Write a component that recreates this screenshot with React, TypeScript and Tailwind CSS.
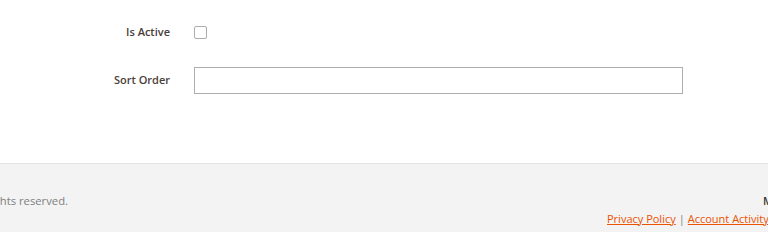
export default function App() {
  return (
    <div
      className="w-[768px] h-[232px] overflow-hidden bg-white flex flex-col"
      style={{ fontFamily: "'Open Sans', 'Liberation Sans', sans-serif" }}
    >
      {/* Form */}
      <div className="h-[163px] pt-[24px] flex flex-col gap-[26px]">
        <div className="flex items-center">
          <label className="w-[170px] text-right text-[11px] font-semibold text-[#4a403a]">
            Is Active
          </label>
          <div className="ml-[24px] w-[13px] h-[13px] border border-[#adadad] rounded-[2px] bg-white" />
        </div>
        <div className="flex items-center">
          <label className="w-[170px] text-right text-[11px] font-semibold text-[#4a403a]">
            Sort Order
          </label>
          <input
            type="text"
            className="ml-[24px] w-[489px] h-[27px] border border-[#adadad] bg-white outline-none"
          />
        </div>
      </div>

      {/* Footer */}
      <div className="flex-1 bg-[#f3f3f3] border-t border-[#e3e3e3] flex justify-between">
        <div className="w-[68px] flex justify-end pt-[29px]">
          <p className="whitespace-nowrap text-[11.25px] text-[#808080]">
            Copyright © 2024 Magento Commerce Inc. All rights reserved.
          </p>
        </div>
        <div className="w-[161px] pt-[29px] flex flex-col">
          <p className="whitespace-nowrap text-[11px] pl-[156px] text-[#41362f]">
            <strong className="font-semibold">Magento</strong> ver. 2.4.6
          </p>
          <p className="whitespace-nowrap text-[11px] mt-[1px] text-[#808080]">
            <a className="text-[#eb5202] underline">Privacy Policy</a>
            <span className="mx-[3px]">|</span>
            <a className="text-[#eb5202] underline">Account Activity</a>
          </p>
        </div>
      </div>
    </div>
  );
}
